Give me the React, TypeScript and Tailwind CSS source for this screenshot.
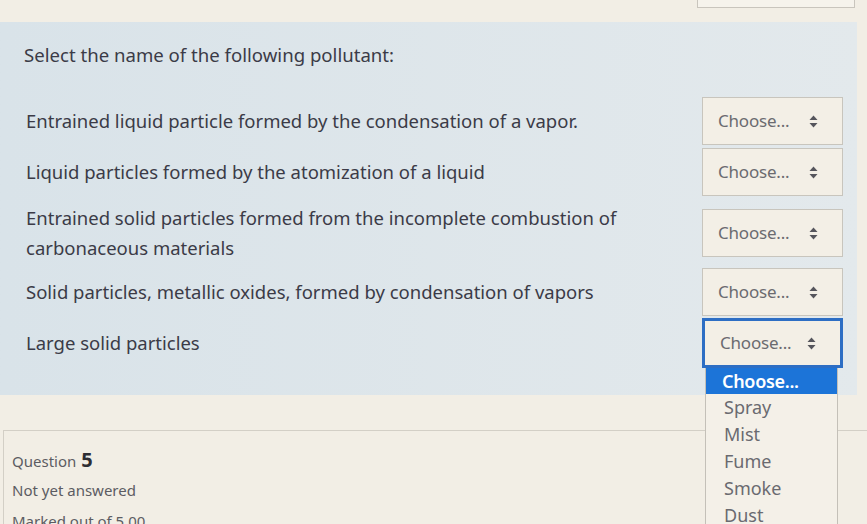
import React from "react";

// Pergunta de associação (Moodle): enunciado, cinco itens com select à direita,
// o último em foco com a lista de opções aberta.

const ROWS: { text: React.ReactNode; h: string; mt: string }[] = [
  { text: "Entrained liquid particle formed by the condensation of a vapor.", h: "h-[50px]", mt: "mt-0" },
  { text: "Liquid particles formed by the atomization of a liquid", h: "h-[50px]", mt: "mt-[1px]" },
  {
    text: (
      <>
        Entrained solid particles formed from the incomplete combustion of
        <br />
        carbonaceous materials
      </>
    ),
    h: "h-[56px]",
    mt: "mt-[8px]",
  },
  { text: "Solid particles, metallic oxides, formed by condensation of vapors", h: "h-[48px]", mt: "mt-[7px]" },
  { text: "Large solid particles", h: "h-[50px]", mt: "mt-[2px]" },
];

const OPTIONS = ["Spray", "Mist", "Fume", "Smoke", "Dust"];

function Arrows() {
  return (
    <svg width="9" height="13" viewBox="0 0 9 13" aria-hidden="true">
      <path d="M4.5 0.5 L8.5 5 L0.5 5 Z" fill="#55555c" />
      <path d="M4.5 12.5 L8.5 8 L0.5 8 Z" fill="#55555c" />
    </svg>
  );
}

function Select({ focused }: { focused?: boolean }) {
  return (
    <div
      className={
        "flex w-[141px] items-center justify-between bg-[#f3efe6] pl-[15px] pr-[24px] text-[17px] tracking-[-0.2px] text-[#6b6b70] " +
        (focused ? "h-[50px] border-[3px] border-[#2d6ec4]" : "h-[48px] border border-[#c8c5bd]")
      }
    >
      <span>Choose...</span>
      <Arrows />
    </div>
  );
}

export default function App() {
  return (
    <div
      className="relative h-[524px] w-[867px] overflow-hidden bg-[#f2eee5] text-[#3b3b47]"
      style={{ fontFamily: '"Noto Sans", "Open Sans", sans-serif' }}
    >
      {/* Barra superior com borda de caixa cortada */}
      <div className="flex h-[22px] justify-end pr-[12px]">
        <div className="h-[8px] w-[158px] border-x border-b border-[#c9c5bd] bg-[#f6f3ec]" />
      </div>

      {/* Painel azul da pergunta */}
      <div className="w-[857px] bg-gradient-to-r from-[#d9e3e9] to-[#e3e9ec] pb-[27px] pt-[21px]">
        <p className="pl-[24px] text-[18.6px] leading-[24px]">Select the name of the following pollutant:</p>

        <div className="mt-[29px] flex flex-col pl-[26px] pr-[14px]">
          {ROWS.map((row, i) => (
            <div key={i} className={"flex items-center justify-between " + row.h + " " + row.mt}>
              <span className="text-[18.5px] leading-[30px]">{row.text}</span>
              <Select focused={i === ROWS.length - 1} />
            </div>
          ))}
        </div>
      </div>

      {/* Bloco da próxima pergunta */}
      <div className="mt-[35px] ml-[3px] h-[200px] border-l border-t border-[#d3cfc6] pl-[8px] pt-[14px] text-[15px] text-[#5c5c62]">
        <div className="flex items-baseline gap-[5px]">
          <span>Question</span>
          <span className="text-[20px] font-bold text-[#2e2e34]">5</span>
        </div>
        <div className="mt-[4px]">Not yet answered</div>
        <div className="mt-[8px]">Marked out of 5.00</div>
      </div>

      {/* Lista aberta do select em foco */}
      <div className="absolute left-[705px] top-[368px] w-[133px] border-x border-[#c4c0b8] bg-[#f4f0e8] pb-[20px] text-[18px]">
        <div className="flex h-[26px] items-center bg-[#1c74d8] pl-[16px] font-semibold tracking-[-0.3px] text-white">Choose...</div>
        {OPTIONS.map((o) => (
          <div key={o} className="flex h-[27px] items-center pl-[18px] text-[#6a6a70]">
            {o}
          </div>
        ))}
      </div>
    </div>
  );
}
